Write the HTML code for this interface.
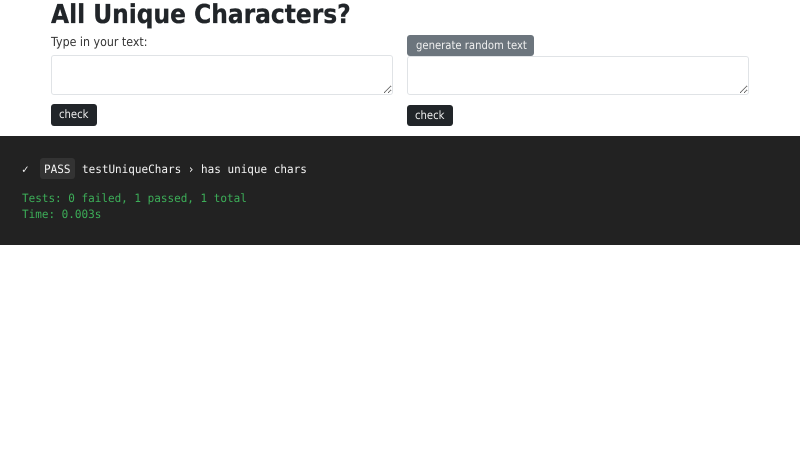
<!DOCTYPE html>
<html>
<head>
<meta charset="utf-8">
<style>
html,body{margin:0;padding:0;width:800px;height:450px;background:#fff;overflow:hidden;font-family:"DejaVu Sans","Liberation Sans",sans-serif;color:#212529;text-rendering:geometricPrecision}
#w{position:absolute;left:0;top:0;width:800px;height:450px;background:#fff;overflow:hidden;filter:blur(.35px)}
.a{position:absolute;white-space:nowrap;transform-origin:0 50%;transform:scaleX(.955)}
h1{margin:0;font-size:26px;font-weight:700;line-height:30px;left:51px;top:0;-webkit-text-stroke:.3px #212529}
h1.a{transform:scaleX(.898)}
.lbl{left:51px;top:34px;font-size:12.5px;line-height:16px;color:#333}
.lbl.a{transform:scaleX(.885)}
textarea{position:absolute;box-sizing:border-box;margin:0;padding:0;border:1px solid #e0e3e6;border-radius:3px;background:#fff;display:block;resize:vertical}
.box{position:absolute;border-radius:3px;background:#212529}
.t{color:#f1f1f1;font-size:11.5px;line-height:20px;height:20px}
.t.a{transform:scaleX(.875)}
.term{position:absolute;left:0;top:136px;width:800px;height:109px;background:#222;font-family:"DejaVu Sans Mono","Liberation Mono",monospace;font-size:11.5px;line-height:16px}
.g{color:#3cae58}
.w{color:#f5f5f5}
</style>
</head>
<body>
<div id="w">
<h1 class="a">All Unique Characters?</h1>
<div class="a lbl">Type in your text:</div>
<textarea style="left:51px;top:55px;width:342px;height:40px"></textarea>
<div class="box" style="left:51px;top:104px;width:46px;height:22px"></div>
<div class="a t" style="left:59px;top:104px">check</div>
<div class="box" style="left:407px;top:35px;width:127px;height:21px;background:#6c757d"></div>
<div class="a t" style="left:416px;top:35px">generate random text</div>
<textarea style="left:407px;top:56px;width:342px;height:39px"></textarea>
<div class="box" style="left:407px;top:105px;width:46px;height:21px"></div>
<div class="a t" style="left:415px;top:105px">check</div>
<div class="term">
<div class="a w" style="left:22px;top:24.5px">✓</div>
<div class="box" style="left:40px;top:22px;width:35px;height:21px;background:#333"></div>
<div class="a w" style="left:44px;top:24.5px">PASS</div>
<div class="a w" style="left:82px;top:24.5px">testUniqueChars › has unique chars</div>
<div class="a g" style="left:22px;top:54px">Tests: 0 failed, 1 passed, 1 total</div>
<div class="a g" style="left:22px;top:70px">Time: 0.003s</div>
</div>
</div>
</body>
</html>
